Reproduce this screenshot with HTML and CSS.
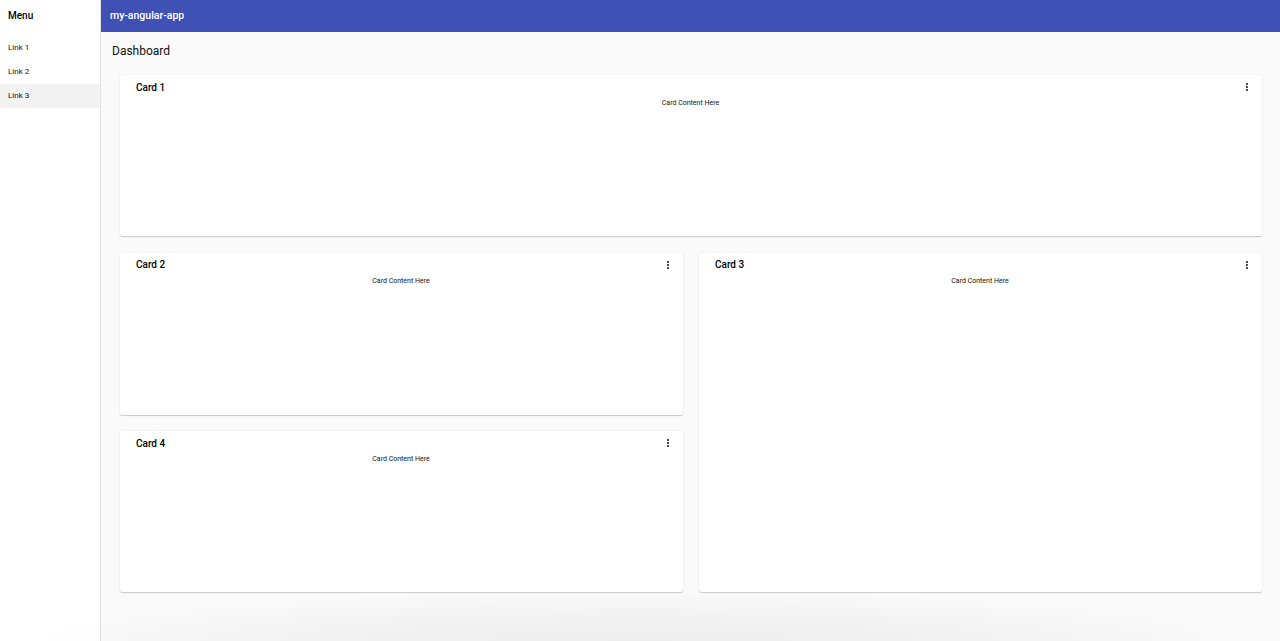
FILE: index.html
```html
<!DOCTYPE html>
<html lang="en">
<head>
	<meta charset="UTF-8">
	<title>my-angular-app</title>
	<link rel="stylesheet" href="styles.css">
</head>
<body>
	<div class="container">
		<div class="sidenav">
			<div class="sidenav-title">Menu</div>
			<ul class="nav-list">
				<li><a>Link 1</a></li>
				<li><a>Link 2</a></li>
				<li class="cur"><a>Link 3</a></li>
			</ul>
		</div>
		<div class="content">
			<div class="toolbar">my-angular-app</div>
			<div class="dashboard">
				<h1>Dashboard</h1>
				<div class="grid">
					<div class="card wide">
						<div class="card-header">
							<span class="card-title">Card 1</span>
							<a class="more"><svg viewBox="0 0 24 24" width="12" height="12"><path d="M12 8c1.1 0 2-.9 2-2s-.9-2-2-2-2 .9-2 2 .9 2 2 2zm0 2c-1.1 0-2 .9-2 2s.9 2 2 2 2-.9 2-2-.9-2-2-2zm0 6c-1.1 0-2 .9-2 2s.9 2 2 2 2-.9 2-2-.9-2-2-2z"/></svg></a>
						</div>
						<div class="card-content">Card Content Here</div>
					</div>
					<div class="card">
						<div class="card-header">
							<span class="card-title">Card 2</span>
							<a class="more"><svg viewBox="0 0 24 24" width="12" height="12"><path d="M12 8c1.1 0 2-.9 2-2s-.9-2-2-2-2 .9-2 2 .9 2 2 2zm0 2c-1.1 0-2 .9-2 2s.9 2 2 2 2-.9 2-2-.9-2-2-2zm0 6c-1.1 0-2 .9-2 2s.9 2 2 2 2-.9 2-2-.9-2-2-2z"/></svg></a>
						</div>
						<div class="card-content">Card Content Here</div>
					</div>
					<div class="card tall">
						<div class="card-header">
							<span class="card-title">Card 3</span>
							<a class="more"><svg viewBox="0 0 24 24" width="12" height="12"><path d="M12 8c1.1 0 2-.9 2-2s-.9-2-2-2-2 .9-2 2 .9 2 2 2zm0 2c-1.1 0-2 .9-2 2s.9 2 2 2 2-.9 2-2-.9-2-2-2zm0 6c-1.1 0-2 .9-2 2s.9 2 2 2 2-.9 2-2-.9-2-2-2z"/></svg></a>
						</div>
						<div class="card-content">Card Content Here</div>
					</div>
					<div class="card">
						<div class="card-header">
							<span class="card-title">Card 4</span>
							<a class="more"><svg viewBox="0 0 24 24" width="12" height="12"><path d="M12 8c1.1 0 2-.9 2-2s-.9-2-2-2-2 .9-2 2 .9 2 2 2zm0 2c-1.1 0-2 .9-2 2s.9 2 2 2 2-.9 2-2-.9-2-2-2zm0 6c-1.1 0-2 .9-2 2s.9 2 2 2 2-.9 2-2-.9-2-2-2z"/></svg></a>
						</div>
						<div class="card-content">Card Content Here</div>
					</div>
				</div>
			</div>
		</div>
	</div>
	<div class="bottom-shade"></div>
</body>
</html>
```
FILE: styles.css
```css
*{
	margin: 0;
	padding: 0;
	box-sizing: border-box;
}
html, body{
	height: 100%;
}
body{
	font-family: Roboto, "Helvetica Neue", "Liberation Sans", sans-serif;
	color: rgba(0,0,0,.87);
	background-color: #fafafa;
	overflow: hidden;
}
.container{
	display: flex;
	height: 100%;
}
.sidenav{
	width: 101px;
	flex-shrink: 0;
	background-color: #fff;
	border-right: 1px solid #e4e4e4;
}
.sidenav-title{
	height: 32px;
	line-height: 32px;
	padding-left: 8px;
	font-size: 10px;
	font-weight: 500;
	color: #000;
}
.nav-list{
	list-style: none;
	padding-top: 4px;
}
.nav-list li{
	height: 24px;
	line-height: 24px;
	padding-left: 8px;
	font-size: 8px;
	color: #111;
}
.nav-list li.cur{
	background-color: #f3f3f3;
}
.content{
	flex: 1;
	display: flex;
	flex-direction: column;
}
.toolbar{
	height: 32px;
	line-height: 32px;
	padding-left: 9px;
	background-color: #3f51b5;
	color: #fff;
	font-size: 10.5px;
	font-weight: 500;
}
.dashboard{
	padding: 9px 18px 0 11px;
}
.dashboard h1{
	font-size: 12px;
	font-weight: 400;
	line-height: 20px;
	color: #111;
	margin-bottom: 14px;
}
.grid{
	display: grid;
	grid-template-columns: 1fr 1fr;
	grid-template-rows: 161px 162px 161px;
	column-gap: 16px;
	row-gap: 16.5px;
	margin-left: 8px;
}
.card{
	background-color: #fff;
	border-radius: 2px;
	box-shadow: 0 1px 1px -1px rgba(0,0,0,.25), 0 1px 1px 0 rgba(0,0,0,.16), 0 0 2px 0 rgba(0,0,0,.08);
	padding: 6px 9px 5px 8px;
}
.card.wide{
	grid-column: span 2;
}
.card.tall{
	grid-row: span 2;
}
.card-header{
	display: flex;
	justify-content: space-between;
	align-items: center;
	height: 12px;
	padding-left: 8px;
}
.card-title{
	font-size: 10px;
	font-weight: 500;
	color: #000;
}
.more{
	display: flex;
	color: #222;
	cursor: pointer;
}
.more svg{
	fill: #222;
}
.card-content{
	text-align: center;
	font-size: 7px;
	margin-top: 6px;
	color: #111;
}
.bottom-shade{
	position: fixed;
	left: 0;
	right: 0;
	bottom: 0;
	height: 50px;
	background: radial-gradient(ellipse 48% 100% at 50% 100%, rgba(0,0,0,.05) 0%, rgba(0,0,0,.03) 50%, rgba(0,0,0,0) 100%);
	pointer-events: none;
}
```
